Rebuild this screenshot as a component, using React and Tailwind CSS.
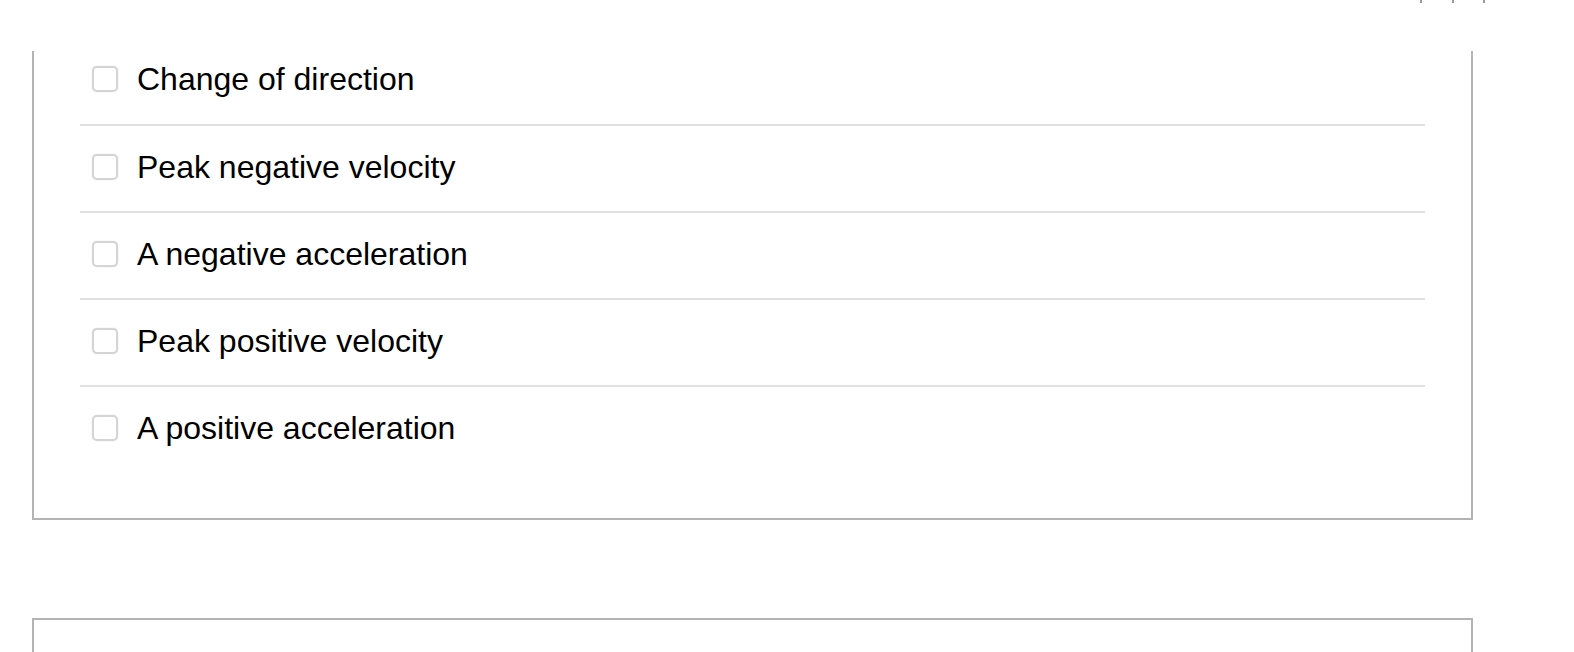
export default function App() {
  const items = [
    "Change of direction",
    "Peak negative velocity",
    "A negative acceleration",
    "Peak positive velocity",
    "A positive acceleration",
  ];
  return (
    <div className="w-[1574px] h-[652px] bg-white overflow-hidden" style={{ fontFamily: '"Liberation Sans", Arial, sans-serif' }}>
      <div className="flex h-[4px] pl-[1420px]">
        <span className="w-[2px] h-[3px] bg-[#999]"></span>
        <span className="ml-[30px] w-[2px] h-[3px] bg-[#999]"></span>
        <span className="ml-[29px] w-[2px] h-[3px] bg-[#999]"></span>
      </div>
      <div className="mt-[47px] ml-[32px] w-[1441px] border-x-2 border-b-2 border-[#b3b3b3] pb-[46px]">
        <div className="mx-[46px]">
          {items.map((t, i) => (
            <div
              key={t}
              className={`flex items-center pl-[12px] ${i === 0 ? "pt-[8px] pb-[25px]" : "pt-[21px] pb-[24px]"} ${i < items.length - 1 ? "border-b-2 border-[#e0e0e0]" : ""}`}
            >
              <span className="w-[26px] h-[26px] rounded-[5px] border-2 border-[#d4d4d4] shadow-[0_0_1px_rgba(0,0,0,0.25)] shrink-0"></span>
              <span className="ml-[19px] text-[32px] leading-[40px] text-black">{t}</span>
            </div>
          ))}
        </div>
      </div>
      <div className="mt-[98px] ml-[32px] w-[1441px] h-[60px] border-x-2 border-t-2 border-[#b3b3b3]"></div>
    </div>
  );
}
